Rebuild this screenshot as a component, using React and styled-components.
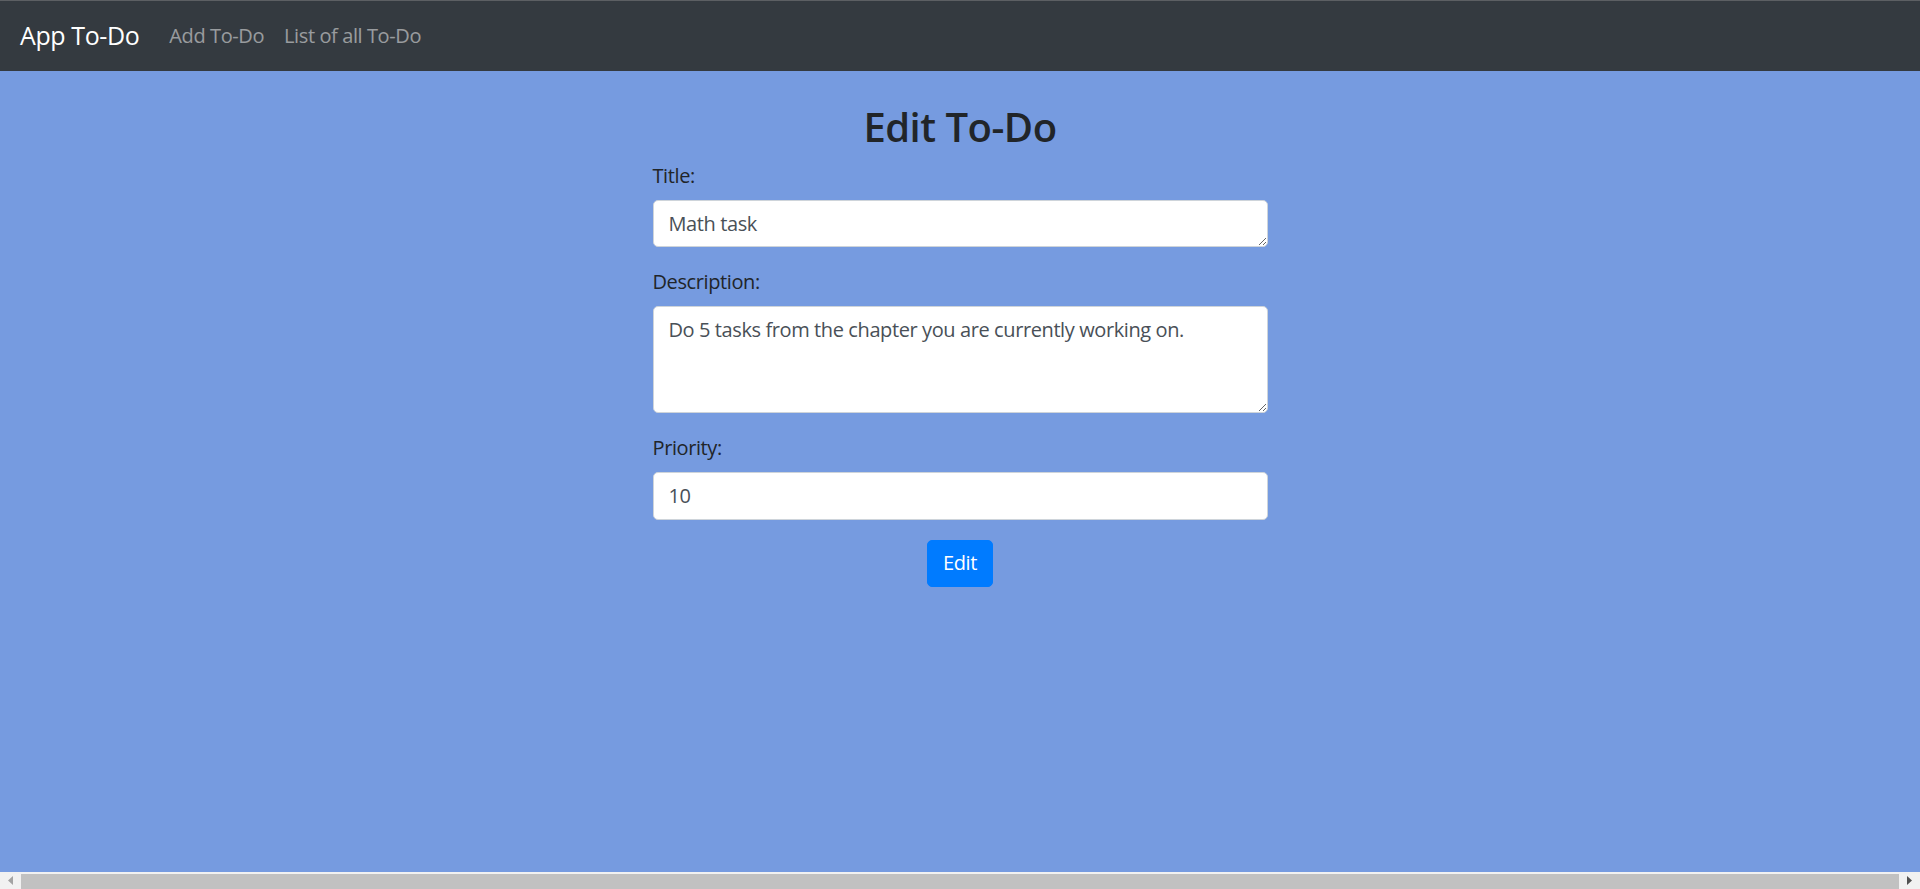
import React from "react";
import styled, { createGlobalStyle } from "styled-components";


const GlobalStyle = createGlobalStyle`
*, *::before, *::after {
    box-sizing: border-box;
}
html, body {
    margin: 0;
    padding: 0;
    height: 100%;
}
body {
    font-family: "Open Sans", "Noto Sans", "Liberation Sans", sans-serif;
    font-size: 20px;
    line-height: 1.5;
    letter-spacing: -0.4px;
    color: #212529;
    overflow: hidden;
}
#root {
    height: 100%;
}
`;

const Page = styled.div`
display: flex;
flex-direction: column;
height: 100vh;
`;

const Navbar = styled.nav`
display: flex;
align-items: center;
height: 71px;
padding: 10px 20px;
background-color: #343a40;
border-top: 1px solid #5c5f63;
`;
const Brand = styled.a`
padding: 6px 0;
margin-right: 20px;
font-size: 25px;
line-height: 1.5;
color: #ffffff;
text-decoration: none;
`;
const NavLinks = styled.div`
display: flex;
`;
const NavLink = styled.a`
padding: 0 10px;
font-size: 20px;
color: rgba(255, 255, 255, 0.5);
text-decoration: none;
`;

const Main = styled.main`
flex: 1;
display: flex;
justify-content: center;
padding-top: 32px;
background-color: #769be0;
`;
const Form = styled.form`
width: 615px;
display: flex;
flex-direction: column;
`;
const Heading = styled.h2`
margin: 0 0 10px;
font-size: 40px;
font-weight: 600;
line-height: 1.2;
letter-spacing: -0.5px;
text-align: center;
color: #212529;
`;
const Group = styled.div`
display: flex;
flex-direction: column;
margin-bottom: 20px;
`;
const Label = styled.label`
margin-bottom: 9px;
font-size: 20px;
line-height: 30px;
color: #212529;
`;
const fieldStyles = `
display: block;
width: 100%;
padding: 7.5px 15px;
font-family: "Open Sans", "Noto Sans", "Liberation Sans", sans-serif;
font-size: 20px;
line-height: 30px;
letter-spacing: -0.4px;
color: #495057;
background-color: #ffffff;
border: 1px solid #ced4da;
border-radius: 5px;
outline: none;
`;
const TextArea = styled.textarea`
${fieldStyles}
height: ${props => props.$rows * 30 + 17}px;
resize: vertical;
`;
const Input = styled.input`
${fieldStyles}
height: 47.5px;
`;
const ButtonRow = styled.div`
display: flex;
justify-content: center;
`;
const Button = styled.button`
padding: 7.5px 15px;
font-family: "Open Sans", "Noto Sans", "Liberation Sans", sans-serif;
font-size: 20px;
line-height: 30px;
letter-spacing: -0.4px;
color: #ffffff;
background-color: #007bff;
border: 1px solid #007bff;
border-radius: 5px;
cursor: pointer;
`;

const ScrollTrack = styled.div`
display: flex;
align-items: center;
height: 17px;
background-color: #f1f1f1;
`;
const ScrollArrow = styled.div`
width: 21px;
height: 17px;
display: flex;
align-items: center;
justify-content: center;
`;
const ScrollThumb = styled.div`
flex: 1;
align-self: flex-end;
height: 15px;
background-color: #c1c1c1;
`;

function Arrow({ dir, color }) {
    const points = dir === "left" ? "5,0 5,9 0,4.5" : "0,0 0,9 5,4.5";
    return (
        <svg width="5" height="9" viewBox="0 0 5 9">
            <polygon points={points} fill={color} />
        </svg>
    );
}


export default function App(){
    return (
        <Page>
            <GlobalStyle />
            <Navbar>
                <Brand href="#">App To-Do</Brand>
                <NavLinks>
                    <NavLink href="#">Add To-Do</NavLink>
                    <NavLink href="#">List of all To-Do</NavLink>
                </NavLinks>
            </Navbar>
            <Main>
                <Form onSubmit={e => e.preventDefault()}>
                    <Heading>Edit To-Do</Heading>
                    <Group>
                        <Label>Title:</Label>
                        <TextArea $rows={1} defaultValue="Math task" />
                    </Group>
                    <Group>
                        <Label>Description:</Label>
                        <TextArea $rows={3} defaultValue="Do 5 tasks from the chapter you are currently working on." />
                    </Group>
                    <Group>
                        <Label>Priority:</Label>
                        <Input type="text" defaultValue="10" />
                    </Group>
                    <ButtonRow>
                        <Button type="submit">Edit</Button>
                    </ButtonRow>
                </Form>
            </Main>
            <ScrollTrack>
                <ScrollArrow><Arrow dir="left" color="#a3a3a3" /></ScrollArrow>
                <ScrollThumb />
                <ScrollArrow><Arrow dir="right" color="#505050" /></ScrollArrow>
            </ScrollTrack>
        </Page>
    )
}
